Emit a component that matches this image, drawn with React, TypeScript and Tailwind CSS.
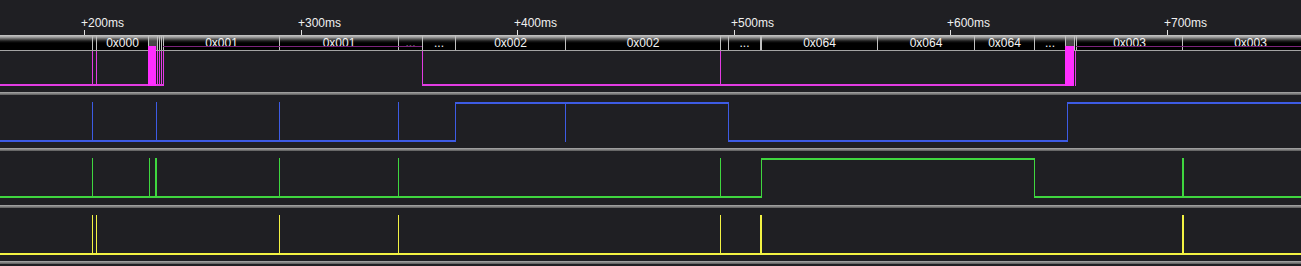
import React from "react";

const W = 1301;

type Seg = { a: number; b: number; label?: string; dense?: boolean };

const segs: Seg[] = [
  { a: 0, b: 92 },
  { a: 92, b: 96 },
  { a: 96, b: 148, label: "0x000" },
  { a: 148, b: 157, dense: true },
  { a: 157, b: 159 },
  { a: 159, b: 161 },
  { a: 161, b: 163 },
  { a: 163, b: 279, label: "0x001" },
  { a: 279, b: 398, label: "0x001" },
  { a: 398, b: 422, label: "..." },
  { a: 422, b: 455, label: "..." },
  { a: 455, b: 565, label: "0x002" },
  { a: 565, b: 720, label: "0x002" },
  { a: 720, b: 728 },
  { a: 728, b: 760, label: "..." },
  { a: 760, b: 761 },
  { a: 761, b: 877, label: "0x064" },
  { a: 877, b: 974, label: "0x064" },
  { a: 974, b: 1034, label: "0x064" },
  { a: 1034, b: 1065, label: "..." },
  { a: 1065, b: 1074, dense: true },
  { a: 1074, b: 1076 },
  { a: 1076, b: 1182, label: "0x003" },
  { a: 1182, b: 1318, label: "0x003" },
];

const ticks = [
  { x: 84, t: "+200ms" },
  { x: 301, t: "+300ms" },
  { x: 517, t: "+400ms" },
  { x: 734, t: "+500ms" },
  { x: 950, t: "+600ms" },
  { x: 1167, t: "+700ms" },
];

type H = [number, number, "h" | "l"];
type V = [number, number];

type WaveProps = {
  h: number;
  hi: number;
  lo: number;
  vTop?: number;
  color: string;
  horiz: H[];
  verts: V[];
  blocks?: [number, number][];
  blockColor?: string;
  hiColor?: string;
  hiThick?: number;
};

function Wave({ h, hi, lo, vTop, color, horiz, verts, blocks = [], blockColor, hiColor, hiThick = 2 }: WaveProps) {
  const vt = vTop ?? hi;
  return (
    <svg width={W} height={h} viewBox={`0 0 ${W} ${h}`} className="block">
      {horiz.map(([a, b, l], i) =>
        l === "h" ? (
          <rect key={"h" + i} x={a} y={hi} width={b - a} height={hiThick} fill={hiColor ?? color} />
        ) : (
          <rect key={"h" + i} x={a} y={lo} width={b - a} height={2} fill={color} />
        )
      )}
      {verts.map(([x, w], i) => (
        <rect key={"v" + i} x={x} y={vt} width={w} height={lo + 2 - vt} fill={color} />
      ))}
      {blocks.map(([a, b], i) => (
        <rect key={"b" + i} x={a} y={hi} width={b - a} height={lo + 2 - hi} fill={blockColor ?? color} />
      ))}
    </svg>
  );
}

function Sep() {
  return <div className="h-[3px] w-full bg-[linear-gradient(to_bottom,#ababab,#5a5a5a)]" />;
}

export default function App() {
  return (
    <div
      className="h-[266px] w-[1301px] overflow-hidden bg-[#1f1f23] text-[#f0f0f0]"
      style={{ fontFamily: '"Liberation Sans", Arial, sans-serif' }}
    >
      {/* Ruler */}
      <div className="relative h-[35px] w-full">
        {ticks.map((k) => (
          <div key={k.t} className="absolute top-0 h-[35px]" style={{ left: k.x }}>
            <div className="absolute left-[-3px] top-[16px] whitespace-nowrap text-[12px] leading-[14px] text-[#f0f0f0]">
              {k.t}
            </div>
            <div className="absolute left-0 top-[30px] h-[5px] w-px bg-[#e0e0e0]" />
          </div>
        ))}
      </div>

      {/* Pink decoder row */}
      <div className="relative h-[57px] w-full">
        <div className="flex h-[16px] w-full overflow-hidden border-b border-[#a4a4a4]">
          {segs.map((s, i) => (
            <div
              key={i}
              className={
                "flex h-full shrink-0 items-center justify-center overflow-hidden whitespace-nowrap pt-px text-[12px] leading-[14px] text-[#f4f4f4] " +
                (i === 0 ? "" : "border-l border-[#c0c0c0] ") +
                (s.dense
                  ? "bg-[linear-gradient(to_bottom,#c8c8c8_0px,#a6a6a6_2px,#747474_4px,#4a4a4a_6px,#3e3e3e_100%)]"
                  : "bg-[linear-gradient(to_bottom,#c8c8c8_0px,#a4a4a4_2px,#5e5e5e_4px,#1c1c1c_6px,#000000_8px,#000000_100%)]")
              }
              style={{ width: s.b - s.a }}
            >
              {s.label}
            </div>
          ))}
        </div>
        <div className="pointer-events-none absolute inset-0">
          <Wave
            h={57}
            hi={11}
            lo={49}
            vTop={16}
            color="#e23ce2"
            blockColor="#ff2eff"
            hiColor="#7c247c"
            hiThick={1}
            horiz={[
              [0, 163, "l"],
              [163, 422, "h"],
              [422, 1065, "l"],
              [1076, W, "h"],
            ]}
            verts={[
              [92, 1],
              [96, 1],
              [157, 1],
              [159, 1],
              [161, 1],
              [163, 1],
              [422, 1],
              [720, 1],
              [1075, 1],
            ]}
            blocks={[
              [148, 156],
              [1065, 1074],
            ]}
          />
        </div>
      </div>
      <Sep />

      {/* Blue */}
      <div className="h-[53px] w-full">
        <Wave
          h={53}
          hi={7}
          lo={45}
          color="#3d5be4"
          horiz={[
            [0, 455, "l"],
            [455, 728, "h"],
            [728, 1067, "l"],
            [1067, W, "h"],
          ]}
          verts={[
            [92, 1],
            [156, 1],
            [279, 1],
            [398, 1],
            [455, 1],
            [565, 1],
            [728, 1],
            [1067, 1],
          ]}
        />
      </div>
      <Sep />

      {/* Green */}
      <div className="h-[54px] w-full">
        <Wave
          h={54}
          hi={7}
          lo={45}
          color="#3fd63f"
          horiz={[
            [0, 761, "l"],
            [761, 1034, "h"],
            [1034, W, "l"],
          ]}
          verts={[
            [92, 1],
            [149, 1],
            [155, 2],
            [279, 1],
            [398, 1],
            [720, 1],
            [761, 1],
            [1034, 1],
            [1182, 2],
          ]}
        />
      </div>
      <Sep />

      {/* Yellow */}
      <div className="h-[53px] w-full">
        <Wave
          h={53}
          hi={7}
          lo={45}
          color="#f2f243"
          horiz={[[0, W, "l"]]}
          verts={[
            [92, 1],
            [96, 1],
            [279, 1],
            [398, 1],
            [720, 1],
            [760, 2],
            [1182, 2],
          ]}
        />
      </div>
      <Sep />
    </div>
  );
}
